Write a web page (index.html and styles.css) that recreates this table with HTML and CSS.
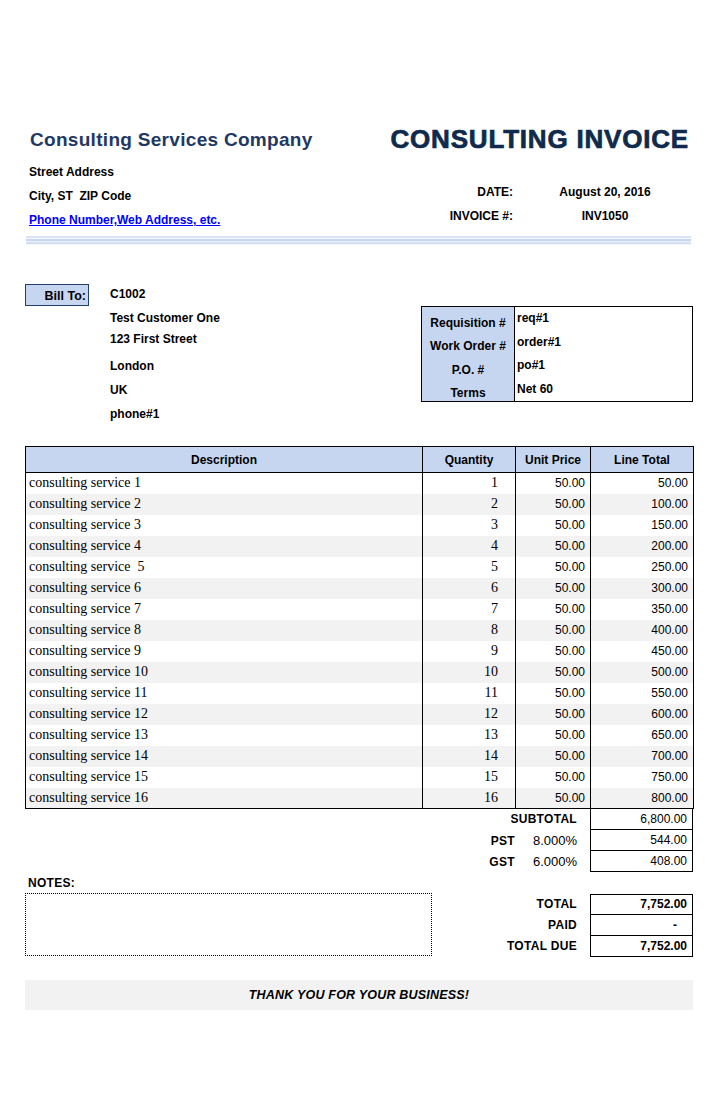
FILE: index.html
```html
<!DOCTYPE html>
<html>
<head>
<meta charset="utf-8">
<link rel="stylesheet" href="styles.css">
</head>
<body>
<div class="page">
  <header class="head">
    <div class="head-left">
      <div class="company">Consulting Services Company</div>
      <div class="addr">
        <div class="line">Street Address</div>
        <div class="line">City, ST&nbsp; ZIP Code</div>
        <div class="line"><a class="link" href="#">Phone Number,Web Address, etc.</a></div>
      </div>
    </div>
    <div class="head-right">
      <div class="title">CONSULTING INVOICE</div>
      <div class="info">
        <div class="info-label">DATE:</div>
        <div class="info-value">August 20, 2016</div>
        <div class="info-label">INVOICE #:</div>
        <div class="info-value">INV1050</div>
      </div>
    </div>
  </header>
  <div class="stripe"></div>

  <section class="bill">
    <div class="bill-to">Bill To:</div>
    <div class="customer">
      <div class="cline">C1002</div>
      <div class="cline">Test Customer One</div>
      <div class="cline up">123 First Street</div>
      <div class="cline down">London</div>
      <div class="cline">UK</div>
      <div class="cline">phone#1</div>
    </div>
    <div class="req">
      <div class="req-label">Requisition #</div><div class="req-value">req#1</div>
      <div class="req-label">Work Order #</div><div class="req-value">order#1</div>
      <div class="req-label">P.O. #</div><div class="req-value">po#1</div>
      <div class="req-label">Terms</div><div class="req-value">Net 60</div>
    </div>
  </section>

  <table class="items">
    <colgroup>
      <col class="c-desc"><col class="c-qty"><col class="c-unit"><col class="c-total">
    </colgroup>
    <thead>
      <tr><th>Description</th><th>Quantity</th><th>Unit Price</th><th>Line Total</th></tr>
    </thead>
    <tbody>
      <tr><td class="desc">consulting service 1</td><td class="qty">1</td><td class="num">50.00</td><td class="num">50.00</td></tr>
      <tr><td class="desc">consulting service 2</td><td class="qty">2</td><td class="num">50.00</td><td class="num">100.00</td></tr>
      <tr><td class="desc">consulting service 3</td><td class="qty">3</td><td class="num">50.00</td><td class="num">150.00</td></tr>
      <tr><td class="desc">consulting service 4</td><td class="qty">4</td><td class="num">50.00</td><td class="num">200.00</td></tr>
      <tr><td class="desc">consulting service &nbsp;5</td><td class="qty">5</td><td class="num">50.00</td><td class="num">250.00</td></tr>
      <tr><td class="desc">consulting service 6</td><td class="qty">6</td><td class="num">50.00</td><td class="num">300.00</td></tr>
      <tr><td class="desc">consulting service 7</td><td class="qty">7</td><td class="num">50.00</td><td class="num">350.00</td></tr>
      <tr><td class="desc">consulting service 8</td><td class="qty">8</td><td class="num">50.00</td><td class="num">400.00</td></tr>
      <tr><td class="desc">consulting service 9</td><td class="qty">9</td><td class="num">50.00</td><td class="num">450.00</td></tr>
      <tr><td class="desc">consulting service 10</td><td class="qty">10</td><td class="num">50.00</td><td class="num">500.00</td></tr>
      <tr><td class="desc">consulting service 11</td><td class="qty">11</td><td class="num">50.00</td><td class="num">550.00</td></tr>
      <tr><td class="desc">consulting service 12</td><td class="qty">12</td><td class="num">50.00</td><td class="num">600.00</td></tr>
      <tr><td class="desc">consulting service 13</td><td class="qty">13</td><td class="num">50.00</td><td class="num">650.00</td></tr>
      <tr><td class="desc">consulting service 14</td><td class="qty">14</td><td class="num">50.00</td><td class="num">700.00</td></tr>
      <tr><td class="desc">consulting service 15</td><td class="qty">15</td><td class="num">50.00</td><td class="num">750.00</td></tr>
      <tr><td class="desc">consulting service 16</td><td class="qty">16</td><td class="num">50.00</td><td class="num">800.00</td></tr>
    </tbody>
  </table>

  <div class="sums">
    <div class="sum-label">SUBTOTAL</div><div class="sum-value">6,800.00</div>
    <div class="sum-label">PST<span class="rate">8.000%</span></div><div class="sum-value">544.00</div>
    <div class="sum-label">GST<span class="rate">6.000%</span></div><div class="sum-value">408.00</div>
  </div>

  <section class="bottom">
    <div class="notes">
      <div class="notes-label">NOTES:</div>
      <div class="notes-box"></div>
    </div>
    <div class="totals">
      <div class="sum-label">TOTAL</div><div class="tot-value first">7,752.00</div>
      <div class="sum-label">PAID</div><div class="tot-value">-&nbsp;&nbsp;&nbsp;</div>
      <div class="sum-label">TOTAL DUE</div><div class="tot-value">7,752.00</div>
    </div>
  </section>

  <footer class="thanks">THANK YOU FOR YOUR BUSINESS!</footer>
</div>
</body>
</html>
```

FILE: styles.css
```css
* { box-sizing: border-box; }
html, body { margin: 0; padding: 0; background: #ffffff; }
body {
  font-family: "Liberation Sans", Arial, sans-serif;
  font-size: 12px;
  font-weight: bold;
  color: #000;
}
.page {
  width: 719px;
  padding: 125px 26px 0 25px;
}

/* header */
.head { display: flex; }
.head-left { width: 355px; }
.head-right { flex: 1; }
.company {
  height: 30px;
  line-height: 30px;
  padding-left: 5px;
  font-size: 19px;
  letter-spacing: 0.3px;
  color: #1f3864;
}
.addr { margin-top: 5px; padding-left: 4px; }
.line { height: 24px; line-height: 24px; }
.link { color: #0000ff; text-decoration: underline; }
.title {
  height: 30px;
  line-height: 28px;
  text-align: right;
  padding-right: 4px;
  font-size: 26px;
  font-weight: 900;
  letter-spacing: 0.8px;
  color: #0f2a4c;
  -webkit-text-stroke: 0.7px #0f2a4c;
}
.info {
  margin-top: 25px;
  display: grid;
  grid-template-columns: 133px 120px;
  column-gap: 32px;
  grid-auto-rows: 24px;
  line-height: 24px;
}
.info-label { text-align: right; }
.info-value { text-align: center; }

.stripe {
  margin-top: 4px;
  height: 9px;
  margin-right: 2px;
  margin-left: 1px;
  background: linear-gradient(to bottom,
    #dbe4f4 0 2px, #f4f7fc 2px 3px, #c9d6ef 3px 5px,
    #eef2fa 5px 6px, #d3ddf3 6px 8px, #f2f5fc 8px 9px);
}

/* bill section */
.bill {
  margin-top: 37px;
  display: flex;
  align-items: flex-start;
}
.bill-to {
  margin-top: 2px;
  width: 64px;
  height: 22px;
  line-height: 22px;
  padding-right: 2px;
  text-align: right;
  background: #c7d6f0;
  border: 1px solid #243f66;
  font-size: 12.5px;
}
.customer { margin-left: 21px; }
.cline { height: 24px; line-height: 24px; }
.cline.up { margin-top: -3px; }
.cline.down { margin-top: 3px; }

.req {
  margin-left: auto;
  margin-top: 24px;
  width: 272px;
  border: 1px solid #000;
  display: grid;
  grid-template-columns: 93px 1fr;
  grid-template-rows: repeat(4, 23.5px);
}
.req-label {
  background: #c7d6f0;
  border-right: 1px solid #000;
  text-align: center;
  display: flex;
  align-items: flex-end;
  justify-content: center;
  line-height: 14px;
  padding-bottom: 1px;
}
.req-value {
  padding-left: 2px;
  padding-top: 4px;
  line-height: 14px;
}

/* items table */
.items {
  margin-top: 20px;
  width: 668px;
  border-collapse: collapse;
  border: 1px solid #000;
  table-layout: fixed;
}
.c-desc { width: 397px; }
.c-qty { width: 93px; }
.c-unit { width: 75px; }
.c-total { width: 103px; }
.items th {
  height: 26px;
  background: #c7d6f0;
  border: 1px solid #000;
  text-align: center;
  font-size: 12px;
  padding: 0;
}
.items td {
  height: 21px;
  padding: 0;
  border-left: 1px solid #000;
  border-right: 1px solid #000;
  font-weight: normal;
  white-space: nowrap;
}
.items tbody tr:nth-child(even) td { background: #f2f2f2; }
.desc {
  padding-left: 3px !important;
  font-family: "Liberation Serif", "Times New Roman", serif;
  font-size: 14px;
  color: #000;
}
.qty {
  text-align: right;
  padding-right: 17px !important;
  font-family: "Liberation Serif", "Times New Roman", serif;
  font-size: 14px;
  color: #000;
}
.num {
  text-align: right;
  padding-right: 5px !important;
  font-size: 12px;
}

/* sums */
.sums {
  display: grid;
  grid-template-columns: 1fr 103px;
  grid-auto-rows: 21px;
  width: 668px;
}
.sum-label {
  text-align: right;
  padding-right: 13px;
  line-height: 21px;
  letter-spacing: 0.3px;
}
.rate {
  font-weight: normal;
  font-size: 13px;
  margin-left: 18px;
  letter-spacing: 0;
}
.sum-value {
  border: 1px solid #000;
  border-top: none;
  text-align: right;
  padding-right: 5px;
  line-height: 20px;
  font-weight: normal;
}

.bottom {
  display: flex;
  align-items: flex-start;
}
.notes { width: 407px; }
.notes-label {
  margin-top: 4px;
  padding-left: 3px;
  height: 14px;
  line-height: 14px;
  letter-spacing: 0.3px;
}
.notes-box {
  margin-top: 3px;
  height: 63px;
  border: 1px dotted #000;
}
.totals {
  flex: 1;
  margin-top: 22px;
  display: grid;
  grid-template-columns: 1fr 103px;
  grid-auto-rows: 21px;
}
.tot-value {
  border: 1px solid #000;
  border-top: none;
  text-align: right;
  padding-right: 5px;
  line-height: 20px;
}
.tot-value.first { border-top: 1px solid #000; line-height: 19px; }

.thanks {
  margin-top: 23px;
  height: 30px;
  line-height: 30px;
  background: #f2f2f2;
  text-align: center;
  font-style: italic;
  font-size: 12.5px;
  letter-spacing: 0.2px;
}
```
